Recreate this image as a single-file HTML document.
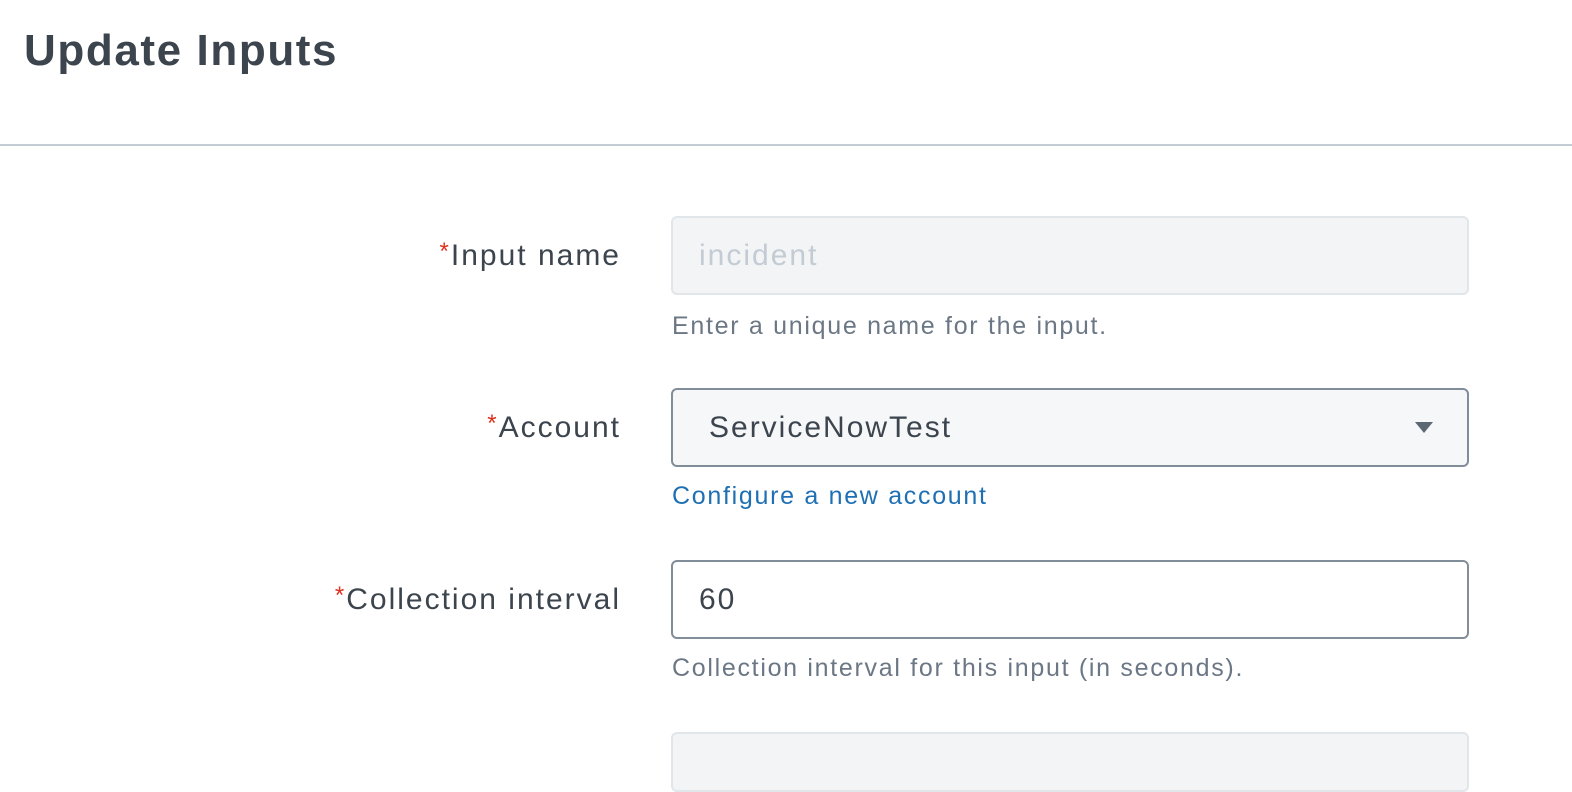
<!DOCTYPE html>
<html><head><style>
body{margin:0;width:1572px;height:750px;overflow:hidden;background:#fff;font-family:"Liberation Sans",sans-serif;position:relative}
.t{position:absolute;left:24px;top:26px;font-size:44px;font-weight:bold;color:#3c444d;letter-spacing:1.6px}
.hr{position:absolute;left:0;top:144px;width:1572px;height:2px;background:#c3cbd4}
.lab{position:absolute;right:951px;font-size:30px;color:#3c444d;white-space:nowrap;letter-spacing:2px}
.lab b{color:#e0301e;font-weight:normal;font-size:24px;vertical-align:6px;margin-right:2px;letter-spacing:0}
.box{position:absolute;left:671px;width:798px;height:79px;border-radius:6px;box-sizing:border-box;font-size:30px;line-height:75px;letter-spacing:2px}
.help{position:absolute;left:672px;font-size:25px;color:#6b7785;letter-spacing:1.7px}
</style></head><body>
<div class="t">Update Inputs</div>
<div class="hr"></div>
<div class="lab" style="top:238px"><b>*</b>Input name</div>
<div class="box" style="top:216px;background:#f2f4f5;border:2px solid #e1e6eb;color:#c3cbd4;padding-left:26px">incident</div>
<div class="help" style="top:312px">Enter a unique name for the input.</div>
<div class="lab" style="top:410px"><b>*</b>Account</div>
<div class="box" style="top:388px;background:#f5f7f9;border:2px solid #818d99;color:#3c444d;padding-left:36px">ServiceNowTest
<svg style="position:absolute;right:34px;top:32px" width="18" height="12"><path d="M0 0H18L9 11Z" fill="#5c6773"/></svg></div>
<div class="help" style="top:482px;color:#1e6fb3">Configure a new account</div>
<div class="lab" style="top:582px"><b>*</b>Collection interval</div>
<div class="box" style="top:560px;background:#fff;border:2px solid #818d99;color:#3c444d;padding-left:26px">60</div>
<div class="help" style="top:654px">Collection interval for this input (in seconds).</div>
<div class="box" style="top:732px;height:60px;background:#f2f4f5;border:2px solid #e1e6eb"></div>
</body></html>
